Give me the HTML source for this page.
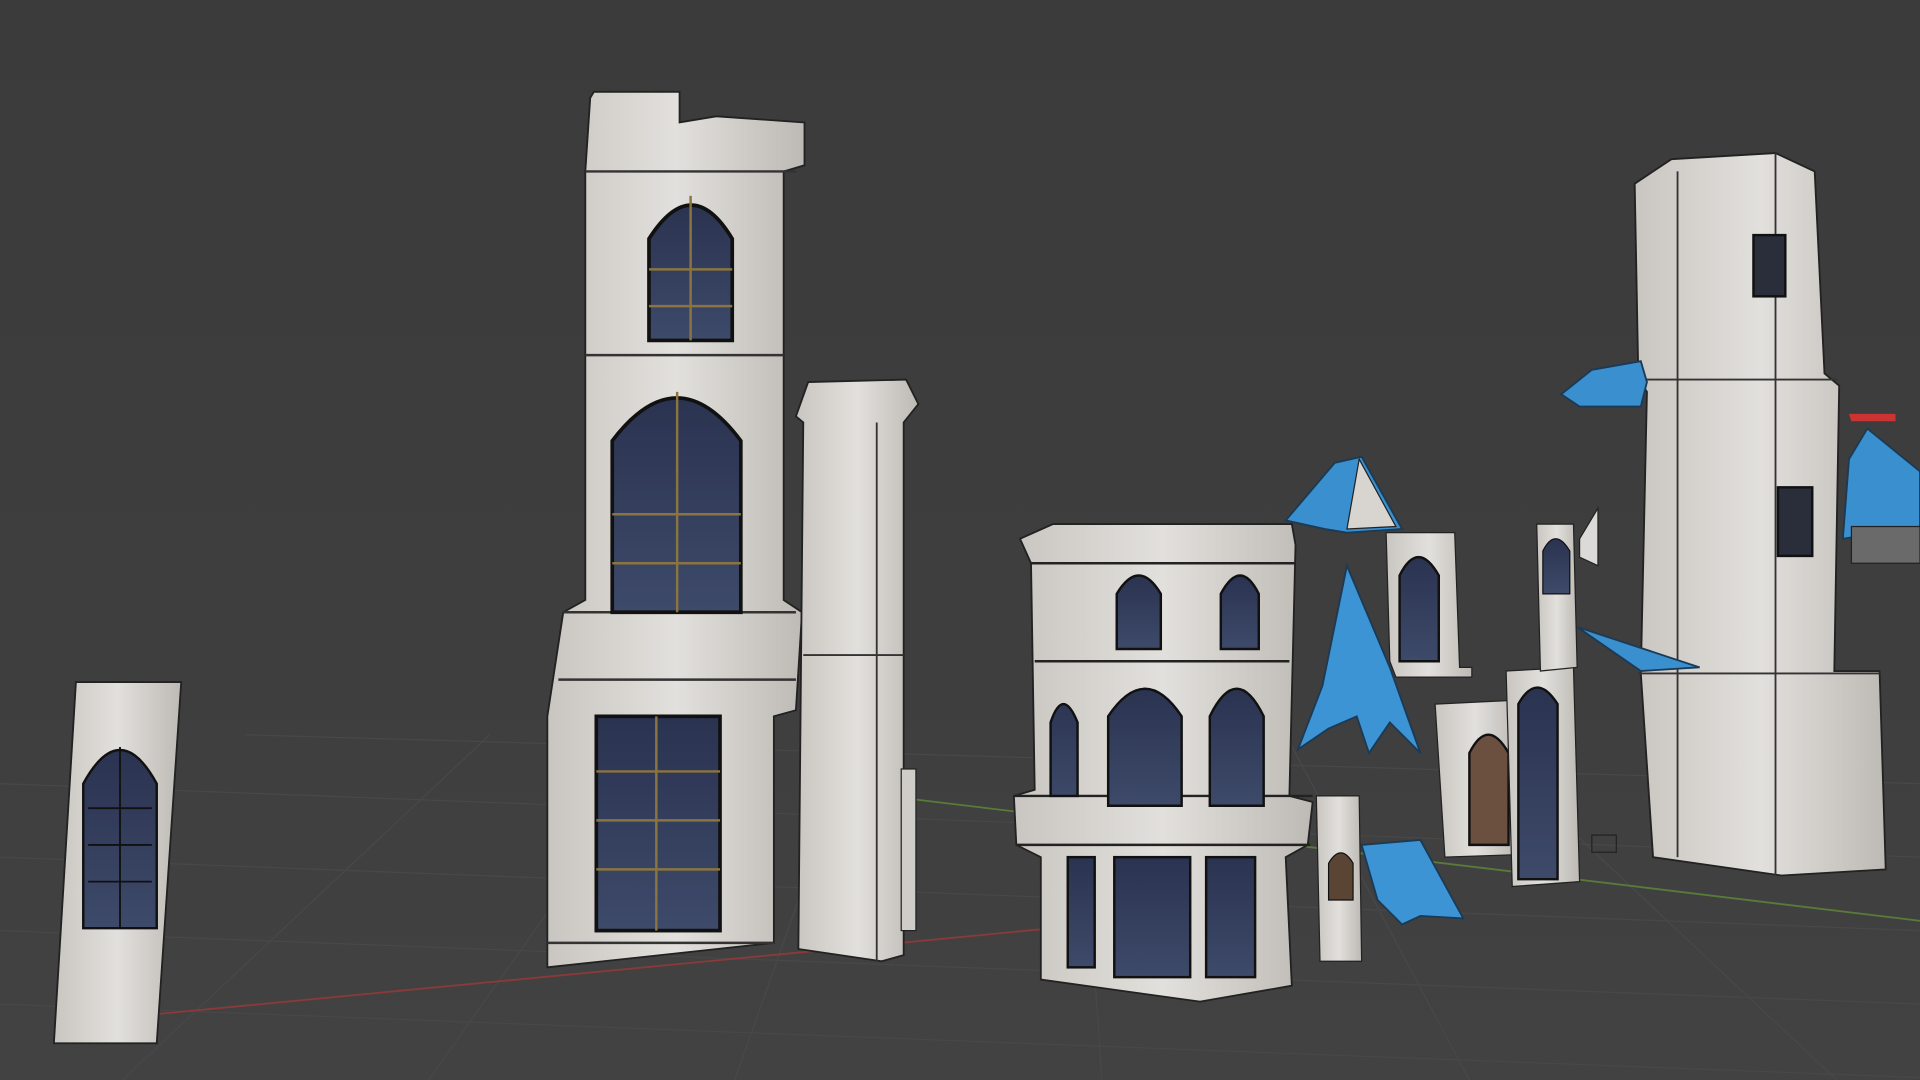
<!DOCTYPE html>
<html><head><style>html,body{margin:0;padding:0;background:#3d3d3d;overflow:hidden}svg{display:block}</style></head>
<body>
<svg width="1920" height="1080" viewBox="0 0 1568 882" preserveAspectRatio="none" xmlns="http://www.w3.org/2000/svg">
<defs>
<linearGradient id="bg" x1="0" y1="0" x2="0" y2="1"><stop offset="0" stop-color="#3b3b3b"/><stop offset="0.6" stop-color="#3e3e3e"/><stop offset="1" stop-color="#424242"/></linearGradient>
<linearGradient id="st" x1="0" y1="0" x2="1" y2="0"><stop offset="0" stop-color="#c9c6c1"/><stop offset="0.5" stop-color="#e2e0dc"/><stop offset="1" stop-color="#bdbab5"/></linearGradient>
<linearGradient id="wn" x1="0" y1="0" x2="0" y2="1"><stop offset="0" stop-color="#2a3350"/><stop offset="1" stop-color="#3e4a6a"/></linearGradient>
</defs>
<rect width="1568" height="882" fill="url(#bg)"/>
<g stroke="#484848" stroke-width="1" fill="none">
<path d="M0 640 L1568 700 M0 700 L1568 760 M0 760 L1568 820 M0 820 L1568 880 M200 600 L1568 640"/>
<path d="M100 882 L400 600 M350 882 L550 600 M600 882 L700 600 M900 882 L880 600 M1200 882 L1050 600 M1500 882 L1200 600"/>
</g>
<path d="M130 828 L860 758" stroke="#8a3a3a" stroke-width="1.5"/>
<path d="M740 652 L1568 752" stroke="#5a7a3a" stroke-width="1.5"/>
<!-- small panel -->
<polygon points="62,557 148,557 128,852 44,852" fill="url(#st)" stroke="#222" stroke-width="1.5"/>
<path d="M68 758 L68 640 Q98 585 128 640 L128 758 Z" fill="url(#wn)" stroke="#111" stroke-width="2"/>
<path d="M72 660 H124 M72 690 H124 M72 720 H124 M98 610 V758" stroke="#111" stroke-width="1.5"/>
<!-- tall tower -->
<polygon points="485,75 555,75 555,100 585,95 657,100 657,135 640,140 640,490 655,500 650,580 632,585 632,770 447,790 447,585 460,500 478,490 478,140 482,80" fill="url(#st)" stroke="#222" stroke-width="1.5"/>
<path d="M478 290 H640 M460 500 H650 M456 555 H650 M447 770 H632 M478 140 H650" stroke="#333" stroke-width="2"/>
<path d="M530 278 V195 Q565 140 598 195 V278 Z" fill="url(#wn)" stroke="#111" stroke-width="3"/>
<path d="M500 500 V360 Q553 290 605 360 V500 Z" fill="url(#wn)" stroke="#111" stroke-width="3"/>
<rect x="487" y="585" width="101" height="175" fill="url(#wn)" stroke="#111" stroke-width="3"/>
<path d="M564 160 V278 M530 220 H598 M530 250 H598 M553 320 V500 M500 420 H605 M500 460 H605 M536 585 V760 M487 630 H588 M487 670 H588 M487 710 H588" stroke="#8a7440" stroke-width="2"/>
<!-- pillar -->
<polygon points="650,340 660,312 740,310 750,330 738,345 738,780 720,785 652,775 656,345" fill="url(#st)" stroke="#222" stroke-width="1.5"/>
<path d="M716 345 V785 M656 535 H738" stroke="#333" stroke-width="1.5"/>
<rect x="736" y="628" width="12" height="132" fill="#cfcdc8" stroke="#222"/>
<!-- round tower -->
<polygon points="833,440 860,428 1055,428 1058,445 1053,650 1072,655 1068,690 1050,700 1055,805 980,818 850,800 850,700 830,690 828,650 845,645 842,460" fill="url(#st)" stroke="#222" stroke-width="1.5"/>
<path d="M842 460 H1058 M845 540 H1053 M828 650 H1072 M830 690 H1070" stroke="#222" stroke-width="2"/>
<path d="M912 530 V485 Q930 455 948 485 V530 Z M997 530 V485 Q1013 455 1028 485 V530 Z" fill="url(#wn)" stroke="#111" stroke-width="2"/>
<path d="M905 658 V585 Q935 540 965 585 V658 Z M988 658 V585 Q1010 540 1032 585 V658 Z M858 650 V590 Q868 560 880 590 V650 Z" fill="url(#wn)" stroke="#111" stroke-width="2"/>
<rect x="910" y="700" width="62" height="98" fill="url(#wn)" stroke="#111" stroke-width="2"/>
<rect x="985" y="700" width="40" height="98" fill="url(#wn)" stroke="#111" stroke-width="2"/>
<rect x="872" y="700" width="22" height="90" fill="url(#wn)" stroke="#111" stroke-width="2"/>
<!-- blue roofs -->
<polygon points="1050,425 1090,378 1112,373 1145,432 1100,435 1082,432" fill="#3a8fcf" stroke="#1b3a55" stroke-width="1.5"/>
<polygon points="1110,375 1140,430 1100,432" fill="#d8d5d0" stroke="#222"/>
<polygon points="1100,462 1135,545 1160,615 1135,590 1118,615 1108,585 1085,595 1060,612 1080,560" fill="#3d94d4" stroke="#1b3a55" stroke-width="1.5"/>
<polygon points="1112,690 1160,686 1195,750 1160,748 1145,755 1125,735" fill="#3d94d4" stroke="#1b3a55" stroke-width="1.5"/>
<!-- small pieces -->
<polygon points="1132,435 1188,435 1192,545 1202,545 1202,553 1140,553 1135,540" fill="url(#st)" stroke="#222"/>
<path d="M1143 540 V470 Q1158 440 1175 470 V540 Z" fill="url(#wn)" stroke="#111" stroke-width="2"/>
<polygon points="1075,650 1110,650 1112,785 1078,785" fill="url(#st)" stroke="#222"/>
<path d="M1085 735 V705 Q1095 688 1105 705 V735 Z" fill="#5a4535" stroke="#111"/>
<polygon points="1172,575 1235,572 1238,698 1180,700" fill="url(#st)" stroke="#222"/>
<path d="M1200 690 V615 Q1215 585 1232 615 V690 Z" fill="#6b5040" stroke="#111" stroke-width="2"/>
<polygon points="1230,548 1285,545 1290,720 1235,724" fill="url(#st)" stroke="#222"/>
<path d="M1240 718 V575 Q1255 548 1272 575 V718 Z" fill="url(#wn)" stroke="#111" stroke-width="2"/>
<polygon points="1255,428 1285,428 1288,545 1258,548" fill="url(#st)" stroke="#222"/>
<path d="M1260 485 V450 Q1270 430 1282 450 V485 Z" fill="url(#wn)" stroke="#111"/>
<polygon points="1290,440 1305,415 1305,462 1290,455" fill="#dcdad6" stroke="#222"/>
<rect x="1300" y="682" width="20" height="14" fill="none" stroke="#222"/>
<!-- big tower -->
<polygon points="1335,150 1365,130 1450,125 1482,140 1490,305 1502,315 1498,548 1535,548 1540,710 1455,715 1350,700 1340,550 1345,320 1338,310" fill="url(#st)" stroke="#222" stroke-width="1.5"/>
<path d="M1340 310 H1500 M1338 550 H1535 M1370 140 V700 M1450 125 V715" stroke="#333" stroke-width="1.5"/>
<rect x="1432" y="192" width="26" height="50" fill="#2a2e3a" stroke="#111" stroke-width="2"/>
<rect x="1452" y="398" width="28" height="56" fill="#2a2e3a" stroke="#111" stroke-width="2"/>
<polygon points="1275,322 1300,302 1340,295 1345,312 1340,332 1290,332" fill="#3a8fcf" stroke="#1b3a55" stroke-width="1.5"/>
<polygon points="1288,512 1388,545 1340,548" fill="#3a8fcf" stroke="#1b3a55" stroke-width="1.5"/>
<polygon points="1505,440 1510,375 1525,350 1568,385 1568,430" fill="#3a8fcf" stroke="#1b3a55" stroke-width="1.5"/>
<polygon points="1510,338 1548,338 1548,344 1512,344" fill="#c33"/>
<rect x="1512" y="430" width="56" height="30" fill="#6a6a6a" stroke="#222"/>
</svg>
</body></html>
